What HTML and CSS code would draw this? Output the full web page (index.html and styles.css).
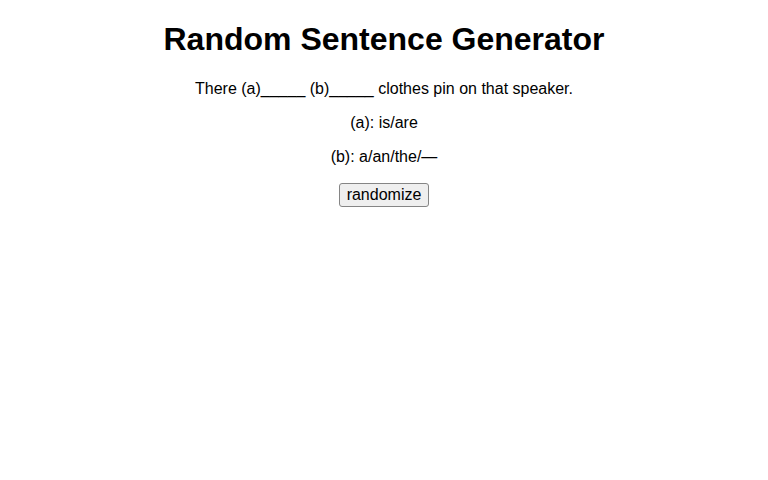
FILE: index.html
```html
<!DOCTYPE html>
<html lang="en">
<head>
    <meta charset="UTF-8">
    <meta name="viewport" content="width=device-width, initial-scale=1.0">
    <title>Random Sentence Generator</title>
    <link rel="stylesheet" href="styles.css">
</head>
<body>
    <h1>Random Sentence Generator</h1>
    <p id="sentence">There (a)_____ (b)_____ clothes pin on that speaker.</p>
    <p class="options">(a): is/are</p>
    <p class="options">(b): a/an/the/—</p>
    <div class="controls">
        <button id="randomize">randomize</button>
    </div>
</body>
</html>
```

FILE: styles.css
```css
body { font-family: "Liberation Sans", Arial, sans-serif; text-align: center; color: #000; background: #fff; }
h1 { font-size: 32px; margin: 13.44px 0 21.44px; }
p { font-size: 16px; margin: 16px 0; }
.controls { margin: 17px 0 16px; }
button { font-family: "Liberation Sans", Arial, sans-serif; font-size: 16px; padding: 1px 7px; height: 24px; background: #efefef; color: #000; border: 1px solid #858585; border-radius: 3px; cursor: pointer; }
button:hover { background: #e5e5e5; }
```
